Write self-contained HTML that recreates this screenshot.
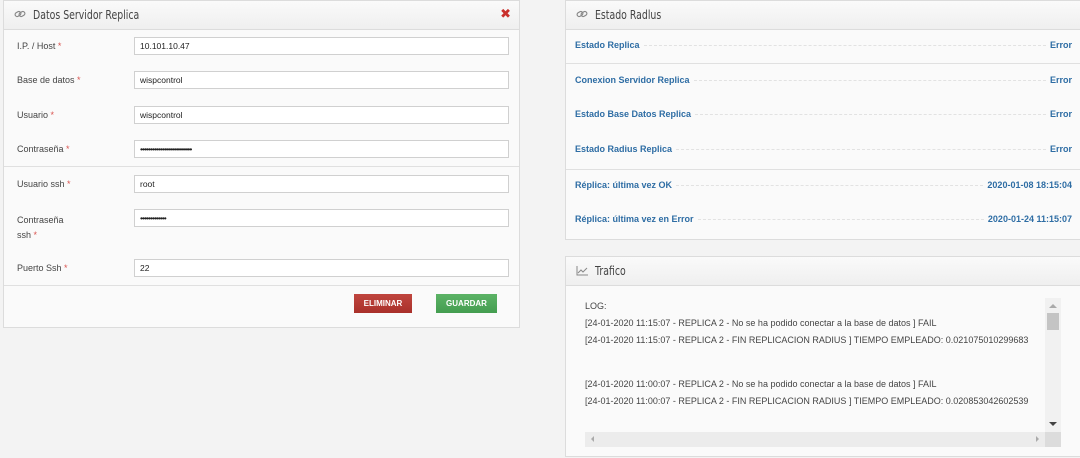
<!DOCTYPE html>
<html><head><meta charset="utf-8"><style>
*{margin:0;padding:0;box-sizing:border-box}
body{width:1080px;height:458px;background:#f3f3f3;font-family:"Liberation Sans",sans-serif;position:relative;overflow:hidden}
.p{position:absolute;background:#fafafa;border:1px solid #dcdcdc}
.h{position:absolute;left:0;right:0;top:0;height:29px;background:linear-gradient(#fafafa,#efefef);border-bottom:1px solid #dcdcdc;font-size:12px;color:#444;padding:7px 0 0 29px;font-family:"DejaVu Sans","Liberation Sans",sans-serif}
.h b{font-weight:normal;display:inline-block;transform:scaleX(0.78);transform-origin:left}
.h svg{position:absolute;left:10px;top:9px}
.l{position:absolute;left:13px;font-size:9px;color:#444}
.l i{color:#d9534f;font-style:normal}
.in{position:absolute;left:130px;width:375px;height:18px;background:#fff;border:1px solid #d0d0d0;font-size:8.5px;color:#222;padding:3px 0 0 5px}
.sep{position:absolute;left:0;right:0;height:1px;background:#e0e0e0}
.r{position:absolute;left:9px;right:12px;font-size:9px;font-weight:bold;color:#2e6da4;display:flex;align-items:center}
.r .d{flex:1;border-bottom:1px dashed #e2e2e2;margin:0 4px}
.btn{position:absolute;top:293px;height:19px;color:#fff;font-size:8px;font-weight:bold;text-align:center;line-height:19px}
.log{font-size:9px;color:#444;position:absolute;left:20px}
</style></head><body>

<div class="p" style="left:3px;top:0;width:517px;height:328px">
 <div class="h"><svg width="12" height="8" viewBox="0 0 12 8"><g fill="none" stroke="#888" stroke-width="1.2"><rect x="1" y="2" width="6" height="4" rx="2" transform="rotate(-30 4 4)"/><rect x="5" y="2" width="6" height="4" rx="2" transform="rotate(-30 8 4)"/></g></svg><b>Datos Servidor Replica</b>
 <span style="position:absolute;right:8px;top:6px;color:#c9302c;font-size:13px;font-weight:bold">✖</span></div>
 <div class="l" style="top:40px">I.P. / Host <i>*</i></div><div class="in" style="top:36px">10.101.10.47</div>
 <div class="l" style="top:74px">Base de datos <i>*</i></div><div class="in" style="top:70px">wispcontrol</div>
 <div class="l" style="top:109px">Usuario <i>*</i></div><div class="in" style="top:105px">wispcontrol</div>
 <div class="l" style="top:143px">Contraseña <i>*</i></div><div class="in" style="top:139px;letter-spacing:-1px">••••••••••••••••••••••••••</div>
 <div class="sep" style="top:165px"></div>
 <div class="l" style="top:178px">Usuario ssh <i>*</i></div><div class="in" style="top:174px">root</div>
 <div class="l" style="top:212px;line-height:15px">Contraseña<br>ssh <i>*</i></div><div class="in" style="top:208px;letter-spacing:-1px">•••••••••••••</div>
 <div class="l" style="top:262px">Puerto Ssh <i>*</i></div><div class="in" style="top:258px">22</div>
 <div class="sep" style="top:284px"></div>
 <div class="btn" style="left:350px;width:58px;background:linear-gradient(#c0463f,#a9302a)">ELIMINAR</div>
 <div class="btn" style="left:432px;width:61px;background:linear-gradient(#5cb366,#449d50)">GUARDAR</div>
</div>

<div class="p" style="left:565px;top:0;width:520px;height:240px">
 <div class="h" style="height:29px"><svg width="12" height="8" viewBox="0 0 12 8"><g fill="none" stroke="#888" stroke-width="1.2"><rect x="1" y="2" width="6" height="4" rx="2" transform="rotate(-30 4 4)"/><rect x="5" y="2" width="6" height="4" rx="2" transform="rotate(-30 8 4)"/></g></svg><b>Estado Radlus</b></div>
 <div class="r" style="top:39px">Estado Replica<span class="d"></span>Error</div>
 <div class="sep" style="top:62px"></div>
 <div class="r" style="top:74px">Conexion Servidor Replica<span class="d"></span>Error</div>
 <div class="r" style="top:108px">Estado Base Datos Replica<span class="d"></span>Error</div>
 <div class="r" style="top:143px">Estado Radius Replica<span class="d"></span>Error</div>
 <div class="sep" style="top:168px"></div>
 <div class="r" style="top:179px">Réplica: última vez OK<span class="d"></span>2020-01-08 18:15:04</div>
 <div class="r" style="top:213px">Réplica: última vez en Error<span class="d"></span>2020-01-24 11:15:07</div>
</div>

<div class="p" style="left:565px;top:256px;width:520px;height:201px">
 <div class="h" style="height:29px"><svg width="12" height="10" viewBox="0 0 12 10"><path d="M1 0V9H12M2 7L5 4L7 6L11 2" fill="none" stroke="#888" stroke-width="1"/></svg><b>Trafico</b></div>
 <div style="position:absolute;left:19px;top:41px;width:477px;height:149px">
  <div class="log" style="top:3px;left:0">LOG:</div>
  <div class="log" style="top:20px;left:0">[24-01-2020 11:15:07 - REPLICA 2 - No se ha podido conectar a la base de datos ] FAIL</div>
  <div class="log" style="top:37px;left:0">[24-01-2020 11:15:07 - REPLICA 2 - FIN REPLICACION RADIUS ] TIEMPO EMPLEADO: 0.021075010299683</div>
  <div class="log" style="top:81px;left:0">[24-01-2020 11:00:07 - REPLICA 2 - No se ha podido conectar a la base de datos ] FAIL</div>
  <div class="log" style="top:98px;left:0">[24-01-2020 11:00:07 - REPLICA 2 - FIN REPLICACION RADIUS ] TIEMPO EMPLEADO: 0.020853042602539</div>
  <div style="position:absolute;left:460px;top:0;width:16px;height:134px;background:#f1f1f1">
   <div style="position:absolute;left:4px;top:6px;border:4px solid transparent;border-bottom-color:#aaa;border-top:0"></div>
   <div style="position:absolute;left:2px;top:15px;width:12px;height:17px;background:#c4c4c4"></div>
   <div style="position:absolute;left:4px;top:124px;border:4px solid transparent;border-top-color:#444;border-bottom:0"></div>
  </div>
  <div style="position:absolute;left:0;top:134px;width:476px;height:15px;background:#ececec">
   <div style="position:absolute;left:6px;top:4px;border:3px solid transparent;border-right-color:#aaa;border-left:0"></div>
   <div style="position:absolute;left:451px;top:4px;border:3px solid transparent;border-left-color:#aaa;border-right:0"></div>
   <div style="position:absolute;left:460px;top:0;width:16px;height:15px;background:#dcdcdc"></div>
  </div>
 </div>
</div>
</body></html>
